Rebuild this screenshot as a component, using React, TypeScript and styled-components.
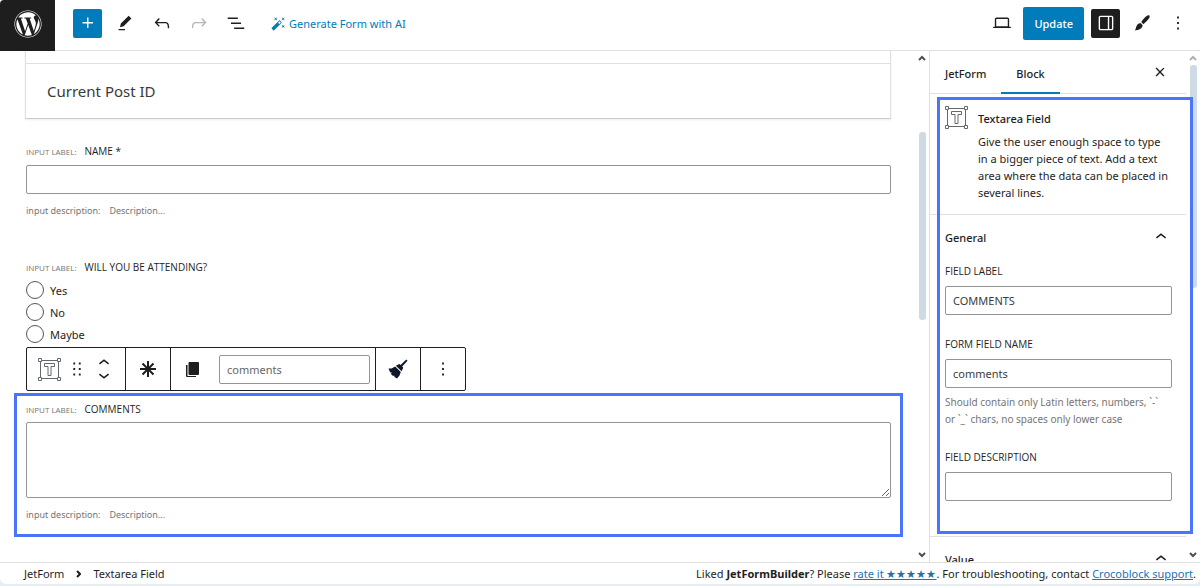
import React from "react";
import styled, { createGlobalStyle, css } from "styled-components";
import { FaWordpress } from "react-icons/fa";

const ink = "#1e1e1e";
const blue = "#007cba";
const line = "#e0e0e0";
const frame = "#4a74f9";

const GlobalStyle = createGlobalStyle`
  *, *::before, *::after { box-sizing: border-box; }
  body { margin: 0; background: #e6edf3; }
  body, button, input, textarea {
    font-family: "Noto Sans", "Open Sans", sans-serif;
    font-size: 11px;
    color: ${ink};
  }
  h2, h3, p { margin: 0; font-size: inherit; font-weight: inherit; }
  svg { display: block; flex: none; }
`;

const Page = styled.div`
  display: flex;
  flex-direction: column;
  height: 100vh;
  padding-bottom: 2px;
`;

const Header = styled.header`
  display: flex;
  flex: none;
  align-items: center;
  height: 51px;
  padding-bottom: 4px;
  background: #fff;
  border-bottom: 1px solid ${line};
`;

const Logo = styled.a`
  display: grid;
  place-items: center;
  align-self: stretch;
  width: 55px;
  margin: 0 18px -5px 0;
  padding-bottom: 3px;
  background: ${ink};
  color: #fff;
  border-top-left-radius: 4px;
`;

const Group = styled.div<{ $gap: number; $end?: boolean }>`
  display: flex;
  align-items: center;
  gap: ${(p) => p.$gap}px;
  ${(p) => p.$end && css`margin-left: auto; padding-right: 8px;`}
`;

const IconButton = styled.button<{ $bg?: string; $fg?: string }>`
  display: grid;
  place-items: center;
  width: 29px;
  height: 29px;
  padding: 0;
  border: 0;
  border-radius: 2px;
  background: ${(p) => p.$bg ?? "transparent"};
  color: ${(p) => p.$fg ?? ink};
`;

const GenerateButton = styled.button`
  display: flex;
  align-items: center;
  gap: 3px;
  margin-left: 21px;
  padding: 0;
  border: 0;
  background: none;
  color: ${blue};
`;

const UpdateButton = styled.button`
  height: 33px;
  padding: 0 11px;
  border: 0;
  border-radius: 2px;
  background: ${blue};
  color: #fff;
  font-weight: 500;
`;

const Body = styled.div`
  display: flex;
  flex: 1;
  min-height: 0;
  background: #fff;
`;

const Editor = styled.main`
  flex: 1;
  min-width: 0;
  overflow: hidden;
  padding: 0 12px 0 14px;
`;

const OptionList = styled.div`
  margin: 0 12px 0 11px;
  border: 1px solid ${line};
  border-top: 0;
  border-bottom-color: #ccc;
  box-shadow: 0 1px 2px rgba(0, 0, 0, 0.08);
`;

const OptionRest = styled.div`
  height: 12px;
`;

const Option = styled.div`
  padding: 0 21px;
  border-top: 1px solid ${line};
  font-size: 15px;
  line-height: 54px;
  color: #3a3a3a;
`;

const Block = styled.section<{ $top: number; $selected?: boolean }>`
  margin-top: ${(p) => p.$top}px;
  padding: 0 12px;
  ${(p) => p.$selected && css`
    padding: 5px 9px 11px;
    border: 3px solid ${frame};
  `}
`;

const LabelRow = styled.div`
  display: flex;
  align-items: baseline;
  gap: 8px;
  font-family: "Open Sans", "Noto Sans", sans-serif;
  font-size: 10px;
  font-weight: 500;
  line-height: 16px;
`;

const Hint = styled.span`
  font-size: 8px;
  color: #757575;
`;

const DescriptionRow = styled(LabelRow)`
  gap: 9px;
  margin-top: 9px;
  font-family: "Noto Sans", "Open Sans", sans-serif;
  font-size: 9px;
  font-weight: 400;
  color: #757575;
`;

const inputLook = css`
  display: block;
  width: 100%;
  border: 1px solid #949494;
  border-radius: 2px;
  background: #fff;
  outline: 0;
`;

const TextInput = styled.input`
  ${inputLook}
  height: 29px;
  padding: 0 7px;
  color: #3c3c3c;
`;

const PreviewInput = styled(TextInput)`
  margin-top: 5px;
`;

const PreviewArea = styled.textarea`
  ${inputLook}
  height: 76px;
  margin-top: 4px;
  resize: vertical;
`;

const Choices = styled.div`
  display: grid;
  gap: 4px;
  margin-top: 5px;
`;

const Choice = styled.label`
  display: flex;
  align-items: center;
  gap: 6px;
  height: 18px;
`;

const Radio = styled.input`
  appearance: none;
  width: 18px;
  height: 18px;
  margin: 0;
  border: 1px solid #555;
  border-radius: 50%;
`;

const BlockToolbar = styled.div`
  display: flex;
  width: max-content;
  height: 44px;
  margin: 4px 12px 2px;
  border: 1px solid ${ink};
  border-radius: 2px;
`;

const ToolCell = styled.div<{ $width: number }>`
  display: flex;
  align-items: center;
  justify-content: center;
  width: ${(p) => p.$width}px;
  & + & { border-left: 1px solid ${ink}; }
`;

const ToolButton = styled.button`
  display: grid;
  place-content: center;
  padding: 0;
  border: 0;
  background: none;
  color: ${ink};
`;

const BlockTypeCell = styled(ToolCell)`
  gap: 5px;
`;

const NameCell = styled(ToolCell)`
  justify-content: space-between;
  padding: 0 5px 0 15px;
`;

const Mover = styled.div`
  display: grid;
  row-gap: 2px;
`;

const MoverButton = styled(ToolButton)`
  height: 10px;
`;

const NameInput = styled(TextInput)`
  width: 151px;
  color: #666;
`;

const Scrollbar = styled.div`
  display: flex;
  flex: none;
  flex-direction: column;
  align-items: center;
  width: 14px;
  padding: 4px 0;
`;

const Thumb = styled.div<{ $size: number }>`
  flex: ${(p) => p.$size} 0 0;
  width: 7px;
  border-radius: 3px;
  background: #cfdbe4;
`;

const Track = styled.div<{ $size: number }>`
  flex: ${(p) => p.$size} 0 0;
`;

const Sidebar = styled.aside`
  position: relative;
  display: flex;
  flex: none;
  width: 271px;
  border-left: 1px solid ${line};
`;

const Panels = styled.div`
  flex: 1;
  min-width: 0;
  overflow: hidden;
`;

const Tabs = styled.div`
  display: flex;
  align-items: center;
  height: 43px;
  border-bottom: 1px solid ${line};
`;

const Tab = styled.button<{ $active?: boolean }>`
  align-self: stretch;
  margin-bottom: -1px;
  padding: 3px 15px 0;
  border: 0;
  border-bottom: 2px solid ${(p) => (p.$active ? blue : "transparent")};
  background: none;
  font-weight: 500;
`;

const CloseButton = styled(ToolButton)`
  margin: 0 15px 0 auto;
`;

const BlockCard = styled.div`
  display: flex;
  align-items: flex-start;
  gap: 10px;
  padding: 12px 14px 13px 15px;
  line-height: 17px;
`;

const CardTitle = styled.h2`
  padding: 4px 0 6px;
  font-weight: 500;
`;

const Panel = styled.section`
  padding: 0 14px 35px 15px;
  border-top: 1px solid ${line};
`;

const PanelTitle = styled.button`
  display: flex;
  align-items: center;
  justify-content: space-between;
  width: 100%;
  height: 44px;
  margin-bottom: 4px;
  padding: 0;
  border: 0;
  background: none;
  font-weight: 500;
`;

const Field = styled.div`
  margin-bottom: 21px;
  &:last-child { margin-bottom: 0; }
`;

const FieldLabel = styled.label`
  display: block;
  margin-bottom: 7px;
  font-family: "Open Sans", "Noto Sans", sans-serif;
  font-size: 10px;
  font-weight: 500;
  line-height: 16px;
`;

const Help = styled.p`
  margin-top: 6px;
  padding-right: 8px;
  font-size: 10px;
  line-height: 17px;
  color: #757575;
`;

const Highlight = styled.div`
  position: absolute;
  top: 46px;
  right: 7px;
  width: 256px;
  height: 437px;
  border: 3px solid ${frame};
  pointer-events: none;
`;

const Footer = styled.footer`
  display: flex;
  flex: none;
  align-items: center;
  justify-content: space-between;
  height: 22px;
  padding: 0 4px 0 24px;
  background: #fff;
  border-top: 1px solid ${line};
  border-radius: 0 0 6px 6px;
`;

const Link = styled.a`
  color: #2271b1;
`;

const paths = {
  plus: "M11 12.5V17.5H12.5V12.5H17.5V11H12.5V6H11V11H6V12.5H11Z",
  edit: "m19 7-3-3-8.5 8.5-1 4 4-1L19 7Zm-7 11.5H5V20h7v-1.5Z",
  undo: "M18.3 11.7c-.6-.6-1.4-.9-2.3-.9H6.7l2.9-3.3-1.1-1-4.5 5L8.5 16l1-1-2.7-2.7H16c.5 0 .9.2 1.3.5 1 1 1 3.4 1 4.5v.3h1.5v-.2c0-1.5 0-4.3-1.5-5.7z",
  redo: "M15.6 6.5l-1.1 1 2.9 3.3H8c-.9 0-1.7.3-2.3.9-1.4 1.5-1.4 4.2-1.4 5.6v.2h1.5v-.3c0-1.1 0-3.5 1-4.5.3-.3.7-.5 1.3-.5h9.2L14.5 15l1.1 1.1 4.6-4.6-4.6-5z",
  list: "M3 6h11v1.5H3V6Zm3.5 5.5h11V13h-11v-1.5ZM21 17H10v1.5h11V17Z",
  desktop: "M20.5 16h-.7V8c0-1.1-.9-2-2-2H6.2c-1.1 0-2 .9-2 2v8h-.7c-.8 0-1.5.7-1.5 1.5h20c0-.8-.7-1.5-1.5-1.5zM5.7 8c0-.3.2-.5.5-.5h11.6c.3 0 .5.2.5.5v7.6H5.7V8z",
  drawer: "M18 4H6c-1.1 0-2 .9-2 2v12c0 1.1.9 2 2 2h12c1.1 0 2-.9 2-2V6c0-1.1-.9-2-2-2zm-4 14.5H6c-.3 0-.5-.2-.5-.5V6c0-.3.2-.5.5-.5h8v13zm4.5-.5c0 .3-.2.5-.5.5h-2.5v-13H18c.3 0 .5.2.5.5v12z",
  drag: "M8 7h2V5H8v2zm0 6h2v-2H8v2zm0 6h2v-2H8v2zm6-14v2h2V5h-2zm0 8h2v-2h-2v2zm0 6h2v-2h-2v2z",
  more: "M13 19h-2v-2h2v2zm0-6h-2v-2h2v2zm0-6h-2V5h2v2z",
  up: "M6.5 12.4L12 8l5.5 4.4-.9 1.2L12 10l-4.5 3.6-1-1.2z",
  down: "M17.5 11.6L12 16l-5.5-4.4.9-1.2L12 14l4.5-3.6 1 1.2z",
  close: "M12 13.06l3.712 3.713 1.061-1.06L13.061 12l3.712-3.712-1.06-1.06L12 10.938 8.288 7.227l-1.061 1.06L10.939 12l-3.712 3.712 1.06 1.061L12 13.061z",
  wand: "M7.5 5.6 5 7l1.4-2.5L5 2l2.5 1.4L10 2 8.6 4.5 10 7 7.5 5.6zM19.5 15.4 22 14l-1.4 2.5L22 19l-2.5-1.4L17 19l1.4-2.5L17 14l2.5 1.4zM22 2l-1.4 2.5L22 7l-2.5-1.4L17 7l1.4-2.5L17 2l2.5 1.4L22 2zM13.34 12.78l2.44-2.44-2.12-2.12-2.44 2.44 2.12 2.12zM14.37 7.29l2.34 2.34c.39.37.39 1.02 0 1.41L5.04 22.71c-.39.39-1.04.39-1.41 0L1.29 20.37c-.39-.37-.39-1.02 0-1.41L12.96 7.29c.39-.39 1.04-.39 1.41 0z",
};

const Icon = ({ name, size = 22 }: { name: keyof typeof paths; size?: number }) => (
  <svg width={size} height={size} viewBox="0 0 24 24" fill="currentColor" aria-hidden="true">
    <path d={paths[name]} />
  </svg>
);

const TextareaIcon = () => (
  <svg width="23" height="23" viewBox="0 0 23 23" fill="none" stroke="#646970" aria-hidden="true">
    <path d="M4 2.5h15M4 20.5h15M2.5 4v15M20.5 4v15" />
    <path fill="#fff" d="M.5.5h3v3h-3zM19.5.5h3v3h-3zM.5 19.5h3v3h-3zM19.5 19.5h3v3h-3z" />
    <path d="M6.5 5.5h10v3H13v9h-3v-9H6.5z" />
  </svg>
);

const BrushIcon = () => (
  <svg width="16" height="16" viewBox="0 0 16 16" fill="currentColor" aria-hidden="true">
    <path d="M15.4.6c.6.8.1 2.1-.7 3.2-1.6 2.2-3.6 4.1-5.3 5.4L7.2 7C8.5 5 10.3 2.9 12.3 1.3 13.4.4 14.8-.1 15.4.6zM6.4 7.9l2.1 2.1c.2 1.5-.5 2.9-2 3.7C4.8 14.7 2.4 15.3.5 15.3c1.2-.9 1.3-1.900 1.6-3.1C2.6 9.9 4.4 8 6.4 7.9z" />
  </svg>
);

const AsteriskIcon = () => (
  <svg width="16" height="16" viewBox="0 0 16 16" stroke="currentColor" strokeWidth="2" aria-hidden="true">
    <path d="M8 0v16M0 8h16M2.5 2.5l11 11M13.5 2.5l-11 11" />
  </svg>
);

const CopyIcon = () => (
  <svg width="13" height="15" viewBox="0 0 13 15" fill="currentColor" aria-hidden="true">
    <path d="M3.5 0H12q1 0 1 1v11q0 1-1 1H3.5q-1 0-1-1V1q0-1 1-1zM0 3h1.5v11H10v1H1q-1 0-1-1z" />
  </svg>
);

const BroomIcon = () => (
  <svg width="20" height="20" viewBox="0 0 20 20" fill="#10172b" aria-hidden="true">
    <path d="M18.3.5 19.5 1.7 14.2 7.6 15.3 8.8 13.5 12.3 7.9 6.7 11.3 4.9 12.6 6z" />
    <path d="M7.2 7.4 12.8 13 11.5 16.5 9 19.5 6.5 18 6.2 16.5 5 17 3 15 3.6 13.2 2.2 13.5.5 9.5 3.5 9.6z" />
  </svg>
);

const Crumb = () => (
  <svg width="5" height="8" viewBox="0 0 5 8" fill="none" stroke="currentColor" strokeWidth="2" aria-hidden="true">
    <path d="M1 1l3 3-3 3" />
  </svg>
);

const ScrollArrow = ({ down, color = "#505050" }: { down?: boolean; color?: string }) => (
  <svg width="8" height="6" viewBox="0 0 8 6" fill="none" stroke={color} strokeWidth="2" aria-hidden="true">
    <path d={down ? "M1 1l3 3 3-3" : "M1 5l3-3 3 3"} />
  </svg>
);

const Description = () => (
  <DescriptionRow>
    <span>input description:</span>
    <span>Description...</span>
  </DescriptionRow>
);

const Caption = ({ id, text }: { id?: string; text: string }) => (
  <LabelRow>
    <Hint>INPUT LABEL:</Hint>
    <label htmlFor={id}>{text}</label>
  </LabelRow>
);

export default function App() {
  return (
    <>
      <GlobalStyle />
      <Page>
        <Header>
          <Logo href="#" aria-label="View posts"><FaWordpress size={28} /></Logo>
          <Group $gap={8}>
            <IconButton $bg={blue} $fg="#fff" aria-label="Add block"><Icon name="plus" /></IconButton>
            <IconButton aria-label="Tools"><Icon name="edit" /></IconButton>
            <IconButton aria-label="Undo"><Icon name="undo" /></IconButton>
            <IconButton aria-label="Redo" $fg="#b5b5b5"><Icon name="redo" /></IconButton>
            <IconButton aria-label="Document overview"><Icon name="list" /></IconButton>
          </Group>
          <GenerateButton><Icon name="wand" size={15} />Generate Form with AI</GenerateButton>
          <Group $gap={7} $end>
            <IconButton aria-label="Preview"><Icon name="desktop" /></IconButton>
            <UpdateButton>Update</UpdateButton>
            <IconButton $bg={ink} $fg="#fff" aria-label="Settings"><Icon name="drawer" /></IconButton>
            <IconButton aria-label="Styles"><BrushIcon /></IconButton>
            <IconButton aria-label="Options"><Icon name="more" /></IconButton>
          </Group>
        </Header>

        <Body>
          <Editor>
            <OptionList>
              <OptionRest />
              <Option>Current Post ID</Option>
            </OptionList>

            <Block $top={24}>
              <Caption id="name" text="NAME *" />
              <PreviewInput id="name" />
              <Description />
            </Block>

            <Block $top={40}>
              <Caption text="WILL YOU BE ATTENDING?" />
              <Choices>
                {["Yes", "No", "Maybe"].map((c) => (
                  <Choice key={c}><Radio type="radio" name="attending" />{c}</Choice>
                ))}
              </Choices>
            </Block>

            <BlockToolbar>
              <BlockTypeCell $width={98}>
                <ToolButton aria-label="Textarea Field"><TextareaIcon /></ToolButton>
                <ToolButton aria-label="Drag"><Icon name="drag" /></ToolButton>
                <Mover>
                  <MoverButton aria-label="Move up"><Icon name="up" /></MoverButton>
                  <MoverButton aria-label="Move down"><Icon name="down" /></MoverButton>
                </Mover>
              </BlockTypeCell>
              <ToolCell $width={45}>
                <ToolButton aria-label="Required"><AsteriskIcon /></ToolButton>
              </ToolCell>
              <NameCell $width={205}>
                <ToolButton aria-label="Copy"><CopyIcon /></ToolButton>
                <NameInput aria-label="Field name" defaultValue="comments" />
              </NameCell>
              <ToolCell $width={45}>
                <ToolButton aria-label="Clear"><BroomIcon /></ToolButton>
              </ToolCell>
              <ToolCell $width={45}>
                <ToolButton aria-label="More"><Icon name="more" /></ToolButton>
              </ToolCell>
            </BlockToolbar>

            <Block $top={0} $selected>
              <Caption id="comments" text="COMMENTS" />
              <PreviewArea id="comments" />
              <Description />
            </Block>
          </Editor>

          <Scrollbar>
            <ScrollArrow />
            <Track $size={71} />
            <Thumb $size={189} />
            <Track $size={232} />
            <ScrollArrow down />
          </Scrollbar>

          <Sidebar>
            <Panels>
              <Tabs>
                <Tab>JetForm</Tab>
                <Tab $active>Block</Tab>
                <CloseButton aria-label="Close settings"><Icon name="close" /></CloseButton>
              </Tabs>
              <BlockCard>
                <TextareaIcon />
                <div>
                  <CardTitle>Textarea Field</CardTitle>
                  <p>Give the user enough space to type in a bigger piece of text. Add a text area where the data can be placed in several lines.</p>
                </div>
              </BlockCard>
              <Panel>
                <PanelTitle>General<Icon name="up" /></PanelTitle>
                <Field>
                  <FieldLabel htmlFor="field-label">FIELD LABEL</FieldLabel>
                  <TextInput id="field-label" defaultValue="COMMENTS" />
                </Field>
                <Field>
                  <FieldLabel htmlFor="field-name">FORM FIELD NAME</FieldLabel>
                  <TextInput id="field-name" defaultValue="comments" />
                  <Help>Should contain only Latin letters, numbers, `-` or `_` chars, no spaces only lower case</Help>
                </Field>
                <Field>
                  <FieldLabel htmlFor="field-description">FIELD DESCRIPTION</FieldLabel>
                  <TextInput id="field-description" />
                </Field>
              </Panel>
              <Panel>
                <PanelTitle>Value<Icon name="up" /></PanelTitle>
              </Panel>
            </Panels>
            <Scrollbar>
              <ScrollArrow color="#b0b0b0" />
              <Track $size={4} />
              <Thumb $size={223} />
              <Track $size={265} />
              <ScrollArrow down />
            </Scrollbar>
            <Highlight />
          </Sidebar>
        </Body>

        <Footer>
          <Group $gap={12}>
            <span>JetForm</span><Crumb /><span>Textarea Field</span>
          </Group>
          <p>Liked <b>JetFormBuilder</b>? Please <Link href="#">rate it ★★★★★</Link>. For troubleshooting, contact <Link href="#">Crocoblock support</Link>.</p>
        </Footer>
      </Page>
    </>
  );
}
